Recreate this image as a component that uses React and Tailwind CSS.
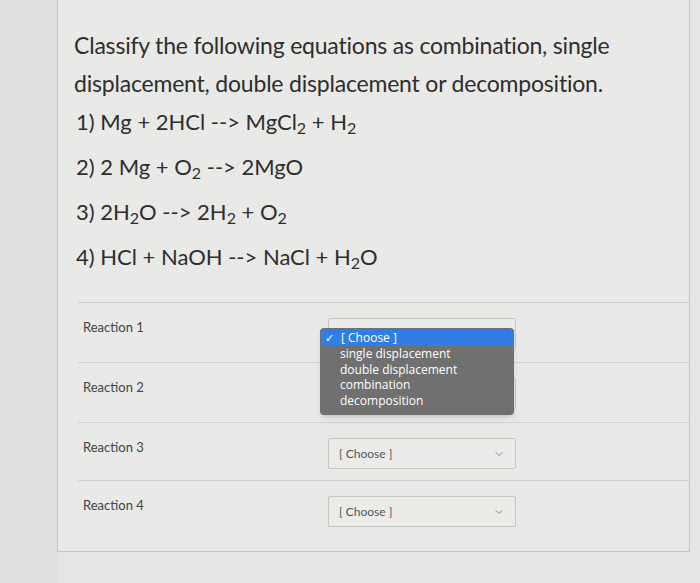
import React from 'react'
import { ChevronDown } from 'lucide-react'

const equations = [
  ['1) Mg + 2HCl --> MgCl', '2', ' + H', '2'],
  ['2) 2 Mg + O', '2', ' --> 2MgO'],
  ['3) 2H', '2', 'O --> 2H', '2', ' + O', '2'],
  ['4) HCl + NaOH --> NaCl + H', '2', 'O'],
]

const options = ['single displacement', 'double displacement', 'combination', 'decomposition']

const rowHeights = ['h-[60px] border-b border-[#d2d2d0]', 'h-[60px] border-b border-[#d2d2d0]', 'h-[58px] border-b border-[#d2d2d0]', 'h-[70px]']

const Select = ({ hidden }) => (
  <div className="w-[188px] h-[31px] border border-[#c6c6c3] rounded-[2px] bg-[#ebebe9] flex items-center justify-between px-[10px]">
    <span className={`text-[12px] text-[#555] ${hidden ? 'opacity-0' : ''}`}>[ Choose ]</span>
    <ChevronDown className="w-3 h-3 text-[#888]" strokeWidth={2} />
  </div>
)

const App = () => {
  return (
    <div className="w-[700px] h-[583px] bg-[#e5e5e3] flex overflow-hidden relative" style={{ fontFamily: 'Lato, "Open Sans", sans-serif' }}>
      {/* left strip */}
      <div className="w-[57px] shrink-0 bg-[#e0e0de]" />

      {/* quiz panel */}
      <div className="w-[633px] h-[552px] shrink-0 bg-[#e9e9e7] border-l border-r border-b border-[#c4c4c2] flex flex-col">
        <div className="pl-[16px] pt-[26px] pr-[30px] text-[#2e2e2e]">
          <p className="text-[23px] leading-[38px] tracking-[-0.2px]">
            Classify the following equations as combination, single displacement, double displacement or decomposition.
          </p>
          <div className="mt-[6px] flex flex-col gap-[18px] text-[22px] leading-[27px] pl-[2px]">
            {equations.map((parts, i) => (
              <p key={i}>
                {parts.map((p, j) =>
                  j % 2 === 1 ? <sub key={j} className="text-[16px]">{p}</sub> : <span key={j}>{p}</span>
                )}
              </p>
            ))}
          </div>
        </div>

        <div className="ml-[20px] mt-[32px] border-t border-[#cdcdcb]">
          {[1, 2, 3, 4].map((n, i) => (
            <div key={n} className={`flex ${rowHeights[i]}`}>
              <div className="w-[250px] pl-[5px] pt-[15px] text-[13px] text-[#444]">Reaction {n}</div>
              <div className="pt-[15px]">
                <Select hidden={n <= 2} />
              </div>
            </div>
          ))}
        </div>
      </div>

      {/* open dropdown menu */}
      <div className="absolute left-[320px] top-[328px] w-[194px] h-[87px] bg-[#707070] rounded-[4px] shadow-md py-[2px] text-white text-[12px] leading-[15.5px]" style={{ fontFamily: '"Open Sans", Lato, sans-serif' }}>
        <div className="bg-[#2f7ee6] rounded-[2px] mx-[1px] flex items-center h-[16px] pl-[4px]">
          <span className="w-[16px] text-[11px]">✓</span>
          <span>[ Choose ]</span>
        </div>
        {options.map((o) => (
          <div key={o} className="pl-[20px]">{o}</div>
        ))}
      </div>
    </div>
  )
}

export default App
